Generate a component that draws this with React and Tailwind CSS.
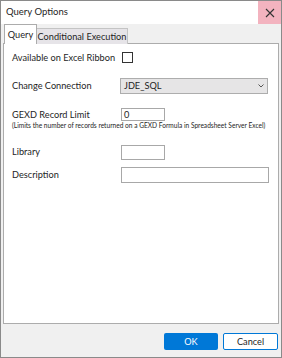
import React from "react";

const font = { fontFamily: 'Lato, "Liberation Sans", sans-serif' };

function Row({ label, children, className = "" }) {
  return (
    <div className={`flex items-center ${className}`}>
      <div className="w-[108px] shrink-0 text-[9.2px] text-[#1e1e1e] leading-none whitespace-nowrap">{label}</div>
      {children}
    </div>
  );
}

export default function App() {
  return (
    <div className="w-[282px] h-[358px] flex flex-col border border-[#8a8a8a] bg-[#f0f0f0] overflow-hidden" style={font}>
      {/* title bar */}
      <div className="h-[23px] shrink-0 bg-white flex items-center justify-between">
        <span className="pl-[5px] text-[9.5px] text-[#1e1e1e]">Query Options</span>
        <button className="w-[23px] h-[23px] bg-[#f3b3bf] flex items-center justify-center">
          <svg width="10" height="10" viewBox="0 0 10 10">
            <path d="M1 1L9 9M9 1L1 9" stroke="#333" strokeWidth="1.1" />
          </svg>
        </button>
      </div>

      {/* tabs */}
      <div className="px-[2px] flex-1 flex flex-col">
        <div className="flex items-end h-[20px] pl-[1px] relative z-10">
          <div className="h-[20px] w-[33px] bg-white border border-b-0 border-[#acacac] text-[9.2px] text-[#1e1e1e] flex items-center justify-center">
            Query
          </div>
          <div className="h-[16px] w-[91px] bg-[#e6e4e8] border border-l-0 border-b-0 border-[#c4c4c4] text-[9.2px] text-[#1e1e1e] flex items-center justify-center whitespace-nowrap">
            Conditional Execution
          </div>
        </div>
        <div className="h-[281px] -mt-[1px] bg-white border border-[#acacac] pl-[8px] pr-[8px] pt-[8px]">
          <Row label="Available on Excel Ribbon">
            <div className="w-[11px] h-[11px] border border-[#333] ml-[2px]" />
          </Row>
          <Row label="Change Connection" className="mt-[15px]">
            <div className="w-[148px] h-[16px] bg-[#e6e5e6] border border-[#adadad] flex items-center justify-between px-[3px]">
              <span className="text-[9.2px] text-[#1e1e1e] leading-none">JDE_SQL</span>
              <svg width="6" height="4" viewBox="0 0 6 4"><path d="M0.5 0.5L3 3L5.5 0.5" stroke="#555" fill="none" /></svg>
            </div>
          </Row>
          <Row label="GEXD Record Limit" className="mt-[14px]">
            <div className="w-[44px] h-[13px] border border-[#a8a8a8] ml-[1px] flex items-center px-[2px] text-[9.2px] leading-none text-[#1e1e1e]">0</div>
          </Row>
          <div className="text-[6.6px] text-[#1e1e1e] leading-none mt-[1px] whitespace-nowrap">
            (Limits the number of records returned on a GEXD Formula in Spreadsheet Server Excel)
          </div>
          <Row label="Library" className="mt-[16px]">
            <div className="w-[44px] h-[15px] border border-[#a8a8a8] ml-[1px]" />
          </Row>
          <Row label="Description" className="mt-[7px]">
            <div className="w-[148px] h-[16px] border border-[#a8a8a8] ml-[1px]" />
          </Row>
        </div>
        {/* footer */}
        <div className="flex justify-end gap-[5px] pt-[9px] pr-[1px]">
          <button className="w-[54px] h-[17px] rounded-[2px] bg-[#0078d7] text-white text-[9.2px] leading-none">OK</button>
          <button className="w-[55px] h-[17px] rounded-[2px] bg-white border border-[#0078d7] text-[#1e1e1e] text-[9.2px] leading-none">Cancel</button>
        </div>
      </div>
    </div>
  );
}
